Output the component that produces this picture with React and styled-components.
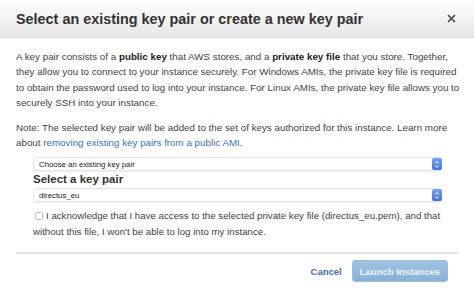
import React, { useState } from "react"
import styled, { createGlobalStyle } from "styled-components"

const GlobalStyle = createGlobalStyle`
  body {
    margin: 0;
    background: #fff;
    font-family: "Liberation Sans", Arial, sans-serif;
    color: #444;
  }
`

const Modal = styled.div`
  width: 474px;
  height: 293px;
  display: flex;
  flex-direction: column;
  background: #fff;
  overflow: hidden;
`

const Header = styled.div`
  height: 38px;
  flex-shrink: 0;
  display: flex;
  align-items: center;
  justify-content: space-between;
  padding: 0 18px 0 16px;
  background: linear-gradient(#fefefe, #e7e7e7);
  border-bottom: 1px solid #d8d8d8;
  box-sizing: border-box;
`

const Title = styled.h1`
  margin: 0;
  font-size: 14.4px;
  font-weight: bold;
  color: #333;
`

const Close = styled.button`
  border: 0;
  background: none;
  padding: 0;
  width: 9px;
  height: 9px;
  display: flex;
  align-items: center;
  justify-content: center;
  cursor: pointer;
`

const Body = styled.div`
  padding: 11px 16px 0;
`

const Para = styled.p`
  margin: 0 0 ${(p) => p.gap || 0}px;
  font-size: 9.8px;
  line-height: 15.4px;
  color: #444;
  white-space: nowrap;

  b {
    color: #222;
  }
`

const Link = styled.a`
  color: #3b73b9;
  text-decoration: none;
`

const Fields = styled.div`
  padding: 7px 0 0 33px;
  width: 409px;
  display: flex;
  flex-direction: column;
`

const Select = styled.div`
  height: 12px;
  display: flex;
  align-items: center;
  justify-content: space-between;
  border: 1px solid #e4e4e4;
  border-radius: 3px;
  background: #fff;
  box-shadow: 0 1px 1px rgba(0, 0, 0, 0.06);
  padding-left: 5px;
  font-size: 7.8px;
  color: #222;
`

const Stepper = styled.span`
  width: 10px;
  height: 12px;
  margin-right: -1px;
  border-radius: 2px;
  background: linear-gradient(#73a2f2, #3f76dd);
  display: flex;
  align-items: center;
  justify-content: center;
`

const Label = styled.label`
  font-size: 11.5px;
  line-height: 14px;
  font-weight: bold;
  color: #333;
  margin: 1px 0 2px;
`

const Ack = styled.div`
  padding: 6px 0 0 33px;
  font-size: 9.7px;
  line-height: 15.4px;
  color: #444;
  white-space: nowrap;
`

const Check = styled.input`
  width: 8px;
  height: 8px;
  margin: 0 3px 0 2px;
  vertical-align: -1px;
  appearance: none;
  border: 1px solid #c4c4c4;
  border-radius: 2px;
  background: #fff;
`

const Footer = styled.div`
  margin: 13px 16px 0;
  border-top: 2px solid #e2e2e2;
  padding: 6px 10px 0 0;
  display: flex;
  align-items: center;
  justify-content: flex-end;
  gap: 10px;
`

const TextButton = styled.button`
  border: 0;
  background: none;
  padding: 0;
  font: bold 9.5px "Liberation Sans", Arial, sans-serif;
  color: #3a70b3;
`

const PrimaryButton = styled.button`
  height: 22px;
  padding: 0 7px;
  border: 1px solid #9bbcdc;
  border-radius: 3px;
  background: linear-gradient(#a1c3e4, #88b1d9);
  color: #eef4fa;
  font: bold 9.5px "Liberation Sans", Arial, sans-serif;
`

const SelectBox = ({ value }) => (
  <Select>
    <span>{value}</span>
    <Stepper>
      <svg width="6" height="9" viewBox="0 0 6 9">
        <path d="M1.2 3.4 L3 1.7 L4.8 3.4 M1.2 5.6 L3 7.3 L4.8 5.6" stroke="#fff" strokeWidth="1" fill="none" />
      </svg>
    </Stepper>
  </Select>
)

const App = () => {
  const [agreed, setAgreed] = useState(false)

  return (
    <Modal>
      <GlobalStyle />
      <Header>
        <Title>Select an existing key pair or create a new key pair</Title>
        <Close aria-label="Close">
          <svg width="9" height="9" viewBox="0 0 9 9">
            <path d="M1 1 L8 8 M8 1 L1 8" stroke="#444" strokeWidth="1.6" />
          </svg>
        </Close>
      </Header>

      <Body>
        <Para gap={9}>
          A key pair consists of a <b>public key</b> that AWS stores, and a <b>private key file</b> that you store. Together,<br />
          they allow you to connect to your instance securely. For Windows AMIs, the private key file is required<br />
          to obtain the password used to log into your instance. For Linux AMIs, the private key file allows you to<br />
          securely SSH into your instance.
        </Para>
        <Para>
          Note: The selected key pair will be added to the set of keys authorized for this instance. Learn more<br />
          about <Link href="#">removing existing key pairs from a public AMI</Link>.
        </Para>
      </Body>

      <Fields>
        <SelectBox value="Choose an existing key pair" />
        <Label>Select a key pair</Label>
        <SelectBox value="directus_eu" />
      </Fields>

      <Ack>
        <Check type="checkbox" checked={agreed} onChange={(e) => setAgreed(e.target.checked)} />
        I acknowledge that I have access to the selected private key file (directus_eu.pem), and that<br />
        without this file, I won't be able to log into my instance.
      </Ack>

      <Footer>
        <TextButton>Cancel</TextButton>
        <PrimaryButton>Launch Instances</PrimaryButton>
      </Footer>
    </Modal>
  )
}

export default App
